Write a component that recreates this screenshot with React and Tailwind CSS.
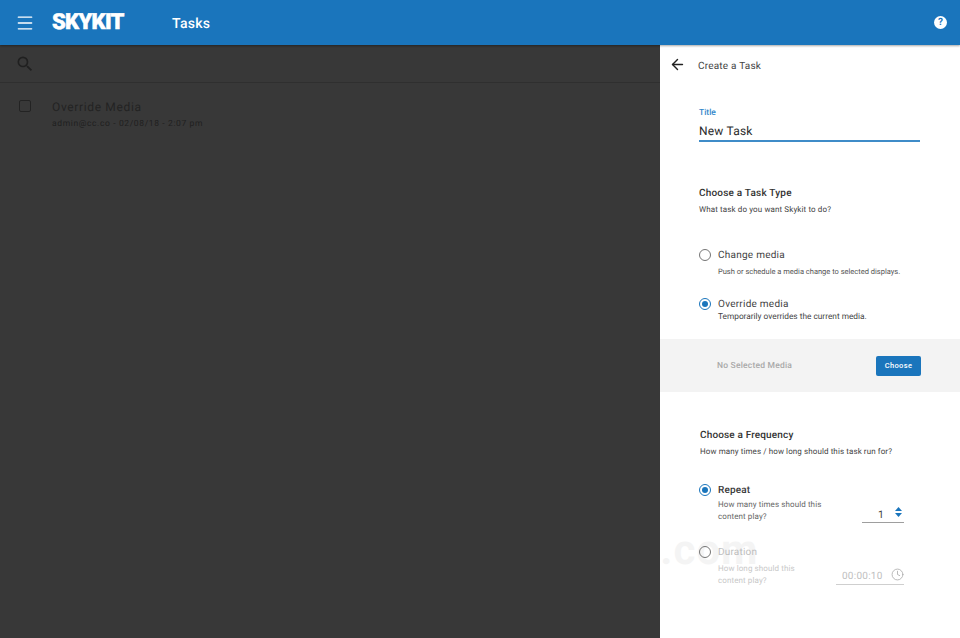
import React from "react";
import { Menu, ArrowLeft, Clock } from "lucide-react";

function Radio({ on }) {
  return (
    <span className={"flex h-3 w-3 shrink-0 items-center justify-center rounded-full border-[1.5px] " + (on ? "border-[#1a75bc]" : "border-[#757575]")}>
      {on && <span className="h-[6.5px] w-[6.5px] rounded-full bg-[#1a75bc]" />}
    </span>
  );
}

export default function App() {
  return (
    <div className="flex h-[638px] w-[960px] flex-col overflow-hidden bg-[#383838] font-['Roboto',sans-serif] [text-rendering:geometricPrecision]">
      <header className="z-10 flex h-[45px] shrink-0 items-center bg-[#1a75bc] text-white shadow-[0_1px_2px_rgba(0,0,0,0.35)]">
        <Menu className="ml-[15px] h-[20px] w-[20px]" strokeWidth={1.6} />
        <span className="ml-[17px] w-[72px] text-[22px] leading-none font-black tracking-[-0.7px] [-webkit-text-stroke:0.5px_white]">SKYKIT</span>
        <span className="mt-[3px] ml-[48px] text-[14px] font-medium tracking-[0.3px]">Tasks</span>
        <span className="mr-[13px] ml-auto flex h-[13px] w-[13px] items-center justify-center rounded-full bg-white text-[10px] leading-none font-bold text-[#1a75bc]">?</span>
      </header>

      <div className="flex min-h-0 flex-1">
        <main className="min-w-0 flex-1">
          <div className="flex h-[38px] items-center border-b border-[#2f2f2f] pl-[15px]">
            <svg width="20" height="20" viewBox="0 0 24 24" fill="#202020">
              <path d="M15.5 14h-.79l-.28-.27A6.47 6.47 0 0 0 16 9.5 6.5 6.5 0 1 0 9.5 16c1.61 0 3.09-.59 4.23-1.57l.27.28v.79l5 4.99L20.49 19l-4.99-5zm-6 0C7.01 14 5 11.99 5 9.5S7.01 5 9.5 5 14 7.01 14 9.5 11.99 14 9.5 14z" />
            </svg>
          </div>
          <div className="flex pt-[17px] pl-[19px]">
            <span className="h-3 w-3 rounded-[2px] border-[1.5px] border-[#232323]" />
            <div className="ml-[21px]">
              <div className="text-[12px] leading-[15px] tracking-[0.65px] text-[#232323]">Override Media</div>
              <div className="mt-[3px] text-[8.5px] leading-[12px] tracking-[0.62px] text-[#1f1f1f]">admin@cc.co - 02/08/18 - 2:07 pm</div>
            </div>
          </div>
        </main>

        <aside className="relative w-[300px] shrink-0 overflow-hidden bg-white text-[#333333]">
          <div className="pointer-events-none absolute top-[485px] left-[-27px] text-[42px] leading-none font-bold tracking-[1px] whitespace-nowrap text-[#000000] opacity-[0.04]">it.com</div>

          <div className="relative">
            <div className="flex h-[40px] items-center pl-[9px]">
              <ArrowLeft className="mt-[-2px] h-[17px] w-[17px] text-[#222222]" strokeWidth={2} />
              <span className="mt-[2px] ml-[12px] text-[10px] tracking-[0.2px] text-[#444444]">Create a Task</span>
            </div>

            <div className="mt-[22px] px-[39px] pr-[40px]">
              <div className="text-[8.5px] leading-[12px] font-medium text-[#3187cb]">Title</div>
              <div className="h-[23px] border-b-2 border-[#3f8cc8] pt-[3px] text-[12px] leading-[19px] tracking-[0.2px] text-[#2b2b2b]">New Task</div>

              <div className="mt-[45px] text-[10px] leading-[14px] font-medium tracking-[0.2px] text-[#333333]">Choose a Task Type</div>
              <div className="mt-[3px] text-[8px] leading-[12px] tracking-[0.12px] text-[#444444]">What task do you want Skykit to do?</div>
            </div>

            <div className="mt-[32px] pl-[39px]">
              <div className="flex h-[14px] items-center">
                <Radio />
                <span className="ml-[7px] text-[10px] tracking-[0.25px] text-[#424242]">Change media</span>
              </div>
              <div className="mt-[4px] pl-[19px] text-[7.5px] leading-[12px] text-[#555555]">Push or schedule a media change to selected displays.</div>
              <div className="mt-[19px] flex h-[14px] items-center">
                <Radio on />
                <span className="ml-[7px] text-[10px] tracking-[0.25px] text-[#424242]">Override media</span>
              </div>
              <div className="pl-[19px] text-[8.3px] leading-[12px] text-[#444444]">Temporarily overrides the current media.</div>
            </div>

            <div className="mt-[16px] flex h-[53px] items-center justify-between bg-[#f3f3f3] pr-[39px] pl-[57px]">
              <span className="mt-[1px] text-[8.5px] font-medium tracking-[0.2px] text-[#a9a9a9]">No Selected Media</span>
              <button className="h-[20px] w-[45px] rounded-[2px] bg-[#1a75bc] text-[7.5px] font-medium tracking-[0.35px] text-white">Choose</button>
            </div>

            <div className="mt-[37px] pl-[40px]">
              <div className="text-[10px] leading-[14px] font-medium tracking-[0.15px] text-[#333333]">Choose a Frequency</div>
              <div className="mt-[3px] text-[8px] leading-[12px] tracking-[0.1px] text-[#444444]">How many times / how long should this task run for?</div>
            </div>

            <div className="mt-[25px] pr-[56px] pl-[39px]">
              <div className="flex h-[14px] items-center">
                <Radio on />
                <span className="ml-[7px] text-[10px] font-medium tracking-[0.15px] text-[#3a3a3a]">Repeat</span>
              </div>
              <div className="mt-[2px] flex items-end justify-between">
                <div className="pl-[19px] text-[8px] leading-[12px] tracking-[0.1px] text-[#666666]">
                  How many times should this<br />content play?
                </div>
                <div className="relative flex h-[18px] w-[42px] items-end justify-center border-b border-[#9e9e9e] pr-[4px] text-[10.5px] leading-[15px] text-[#444444]">
                  1
                  <svg className="absolute top-[2px] right-[2px]" width="7" height="10" viewBox="0 0 7 10" fill="#1a75bc">
                    <path d="M3.5 0 L7 4 L0 4 Z" />
                    <path d="M3.5 10 L7 6 L0 6 Z" />
                  </svg>
                </div>
              </div>

              <div className="mt-[22px] flex h-[14px] items-center">
                <Radio />
                <span className="ml-[7px] text-[10px] tracking-[0.2px] text-[#bdbdbd]">Duration</span>
              </div>
              <div className="mt-[4px] flex items-end justify-between">
                <div className="pl-[19px] text-[8px] leading-[12px] tracking-[0.1px] text-[#c8c8c8]">
                  How long should this<br />content play?
                </div>
                <div className="relative mb-[2px] flex h-[22px] w-[68px] items-end border-b border-[#cfcfcf] pl-[6px] text-[10px] leading-[15px] tracking-[0.25px] text-[#c0c0c0]">
                  00:00:10
                  <Clock className="absolute top-[5px] right-0 h-[13px] w-[13px] text-[#aaaaaa]" strokeWidth={1.5} />
                </div>
              </div>
            </div>
          </div>
        </aside>
      </div>
    </div>
  );
}
